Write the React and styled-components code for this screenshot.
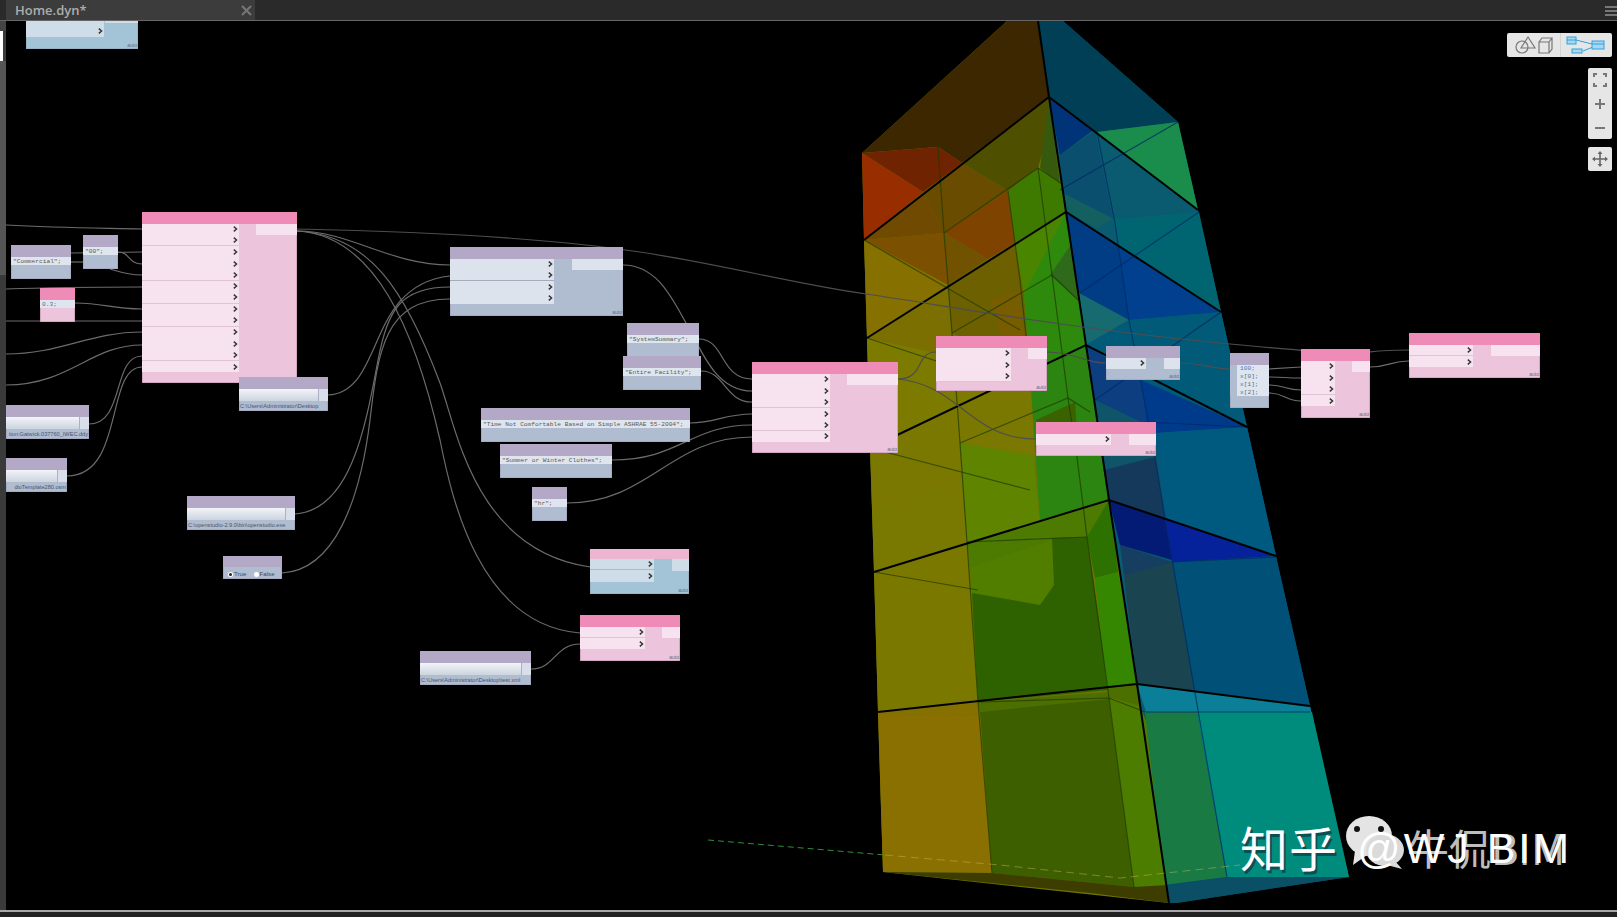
import React from 'react';
import styled, {createGlobalStyle} from 'styled-components';

const GlobalStyle = createGlobalStyle`
  html, body { margin: 0; padding: 0; background: #000; overflow: hidden; }
  #root { width: 1617px; height: 917px; }
`;

const tones = {
  pink: {header: '#ee8bb6', body: '#ecc4dc', row: '#f6e3ef', line: '#dfc3d6', edge: '#b98aa8'},
  grey: {header: '#b3a9c6', body: '#b0bcd0', row: '#dde3ec', line: '#a4acbc', edge: '#9a9cb4'},
  blue: {header: '#ecb5d2', body: '#a3c3d6', row: '#cfdde8', line: '#a5bccd', edge: '#8ca6ba'},
};

const Page = styled.div`
  width: 1617px;
  height: 917px;
  display: flex;
  flex-direction: column;
  background: #000;
  font-family: 'Open Sans', 'Liberation Sans', sans-serif;
`;

const TabBar = styled.div`
  height: 20px;
  flex: none;
  display: flex;
  align-items: stretch;
  justify-content: space-between;
  background: #2a2a2a;
  border-bottom: 1px solid #666;
`;

const Tab = styled.div`
  box-sizing: border-box;
  width: 249px;
  margin-left: 6px;
  padding: 0 3px 0 9px;
  display: flex;
  align-items: center;
  justify-content: space-between;
  background: #3c3c3c;
  color: #adadad;
  font-size: 13px;
  font-weight: 600;
`;

const Hamburger = styled.div`
  width: 12px;
  margin-top: 6px;
  display: flex;
  flex-direction: column;
  gap: 2px;
  i { display: block; height: 2px; background: #777; }
`;

const Main = styled.div`
  flex: 1;
  display: flex;
  min-height: 0;
`;

const LeftStrip = styled.div`
  width: 6px;
  flex: none;
  display: flex;
  flex-direction: column;
  background: #3a3a3a;
`;

const StripCap = styled.div`
  height: 10px;
  background: #444;
`;

const StripMark = styled.div`
  width: 3px;
  height: 30px;
  background: #fff;
`;

const StripThumb = styled.div`
  height: 214px;
  background: #555;
`;

const Canvas = styled.div`
  flex: 1;
  position: relative;
  overflow: hidden;
  background: #000;
`;

const Stage = styled.div`
  position: absolute;
  left: -6px;
  top: -21px;
  width: 1617px;
  height: 917px;
`;

const Drawing = styled.svg`
  position: absolute;
  left: 0;
  top: 0;
`;

const BottomBar = styled.div`
  height: 5px;
  flex: none;
  background: #222;
  border-top: 2px solid #a8a8a8;
`;

const NodeBox = styled.div`
  position: absolute;
  left: ${p => p.$x}px;
  top: ${p => p.$y}px;
  width: ${p => p.$w}px;
  height: ${p => p.$h}px;
  display: flex;
  flex-direction: column;
  background: ${p => tones[p.$tone].body};
  box-shadow: inset 0 0 0 0.5px ${p => tones[p.$tone].edge};
`;

const NodeHeader = styled.div`
  height: ${p => p.$h}px;
  flex: none;
  background: ${p => tones[p.$tone].header};
`;

const NodeBody = styled.div`
  display: flex;
  justify-content: space-between;
  align-items: flex-start;
`;

const Inputs = styled.div`
  width: ${p => p.$w}px;
  display: flex;
  flex-direction: column;
  background: ${p => tones[p.$tone].row};
`;

const InputRow = styled.div`
  height: ${p => p.$h}px;
  box-sizing: border-box;
  display: flex;
  align-items: center;
  justify-content: flex-end;
  padding-right: 1px;
  border-bottom: ${p => (p.$sep ? `1px solid ${tones[p.$tone].line}` : 'none')};
`;

const Output = styled.div`
  width: ${p => p.$w}px;
  height: 11.5px;
  flex: none;
  background: ${p => tones[p.$tone].row};
`;

const AutoLabel = styled.span`
  position: absolute;
  right: 1px;
  bottom: 1px;
  font-family: 'Liberation Sans', sans-serif;
  font-size: 5px;
  line-height: 6px;
  color: #5f6f86;
`;

const CodeRow = styled.div`
  height: ${p => p.$h}px;
  display: flex;
  align-items: center;
  padding-left: 2px;
  background: #dfe5ee;
  color: ${p => p.$color || '#5a5a52'};
  font-family: 'Liberation Mono', monospace;
  font-size: 6.2px;
  white-space: pre;
  overflow: hidden;
`;

const PickerRow = styled.div`
  height: 11.5px;
  flex: none;
  display: flex;
  background: #dfe5ee;
`;

const PickerField = styled.div`
  flex: 1;
  background: linear-gradient(#f2f4f8, #ccd4df);
`;

const PickerGrip = styled.div`
  width: 9px;
  background: #d9dfea;
  border-left: 1px solid #a9b2c4;
`;

const PathLabel = styled.div`
  flex: 1;
  display: flex;
  align-items: center;
  justify-content: ${p => (p.$clip ? 'flex-end' : 'flex-start')};
  padding: 0 1px;
  color: #45566e;
  font-family: 'Liberation Sans', sans-serif;
  font-size: 5.6px;
  white-space: nowrap;
  overflow: hidden;
`;

const ToggleRow = styled.div`
  height: 12px;
  padding-left: 6px;
  display: flex;
  align-items: center;
  gap: 8px;
  color: #3d4a60;
  font-family: 'Liberation Sans', sans-serif;
  font-size: 6.2px;
`;

const Radio = styled.i`
  display: inline-block;
  width: 3px;
  height: 3px;
  margin-right: 2px;
  border-radius: 50%;
  background: ${p => (p.$on ? '#222' : '#fff')};
  box-shadow: 0 0 0 1px #fff;
`;

const CodeLines = styled.div`
  display: flex;
  flex-direction: column;
  padding-left: 10px;
  background: linear-gradient(to right, #b0bcd0 0 7px, #dfe5ee 7px);
  height: 31px;
  font-family: 'Liberation Mono', monospace;
  font-size: 6.2px;
  line-height: 8px;
  color: #5a6d8c;
  span:first-child { color: #3f76c4; }
`;

const Controls = styled.div`
  position: absolute;
  right: 5px;
  top: 33px;
  display: flex;
  flex-direction: column;
  align-items: flex-end;
  gap: 11px;
`;

const ViewSwitch = styled.div`
  width: 105px;
  height: 24px;
  display: flex;
  background: #e6e6e6;
  border-radius: 2px;
`;

const ViewButton = styled.div`
  width: ${p => p.$w}px;
  display: flex;
  align-items: center;
  justify-content: center;
  border-right: ${p => (p.$split ? '1px solid #d4d4d4' : 'none')};
`;

const ZoomStack = styled.div`
  width: 24px;
  display: flex;
  flex-direction: column;
  gap: 8px;
`;

const ZoomGroup = styled.div`
  display: flex;
  flex-direction: column;
  background: #e6e6e6;
  border-radius: 2px;
`;

const ZoomButton = styled.div`
  height: ${p => p.$h}px;
  display: flex;
  align-items: center;
  justify-content: center;
`;

const Watermark = styled.div`
  position: absolute;
  left: ${p => p.$x}px;
  top: ${p => p.$y}px;
  color: ${p => p.$color || '#fff'};
  font-family: ${p => p.$family || "'Liberation Sans'"}, 'Noto Sans CJK SC', sans-serif;
  font-size: ${p => p.$size}px;
  font-weight: 400;
  line-height: 1;
  letter-spacing: ${p => p.$spacing || 0}px;
  white-space: nowrap;
  text-shadow: ${p => p.$shadow || 'none'};
`;

const Wechat = styled.svg`
  position: absolute;
  left: 1345px;
  top: 813px;
`;

const faces = [
  // whole left and right sides, so no black shows between the patches
  ['862,153 1007,21 1038,21 1049,97 1066,212 1086,345 1109,500 1137,684 1169,903 883,872 878,712 874,572 870,448 867,338 864,240', '#6e7400'],
  ['1038,21 1063,21 1178,122 1198,210 1221,312 1247,427 1276,556 1310,706 1349,877 1176,903 1169,903 1137,684 1109,500 1086,345 1066,212 1049,97', '#0a5a70'],
  // roof and first band, left face
  ['862,153 1007,21 1038,21 1049,97 962,163 938,147', '#3c2700'],
  ['862,153 938,147 962,163 923,192', '#6f2300'],
  ['862,153 923,192 864,240', '#982d00'],
  ['1049,97 962,163 1008,191 1038,168 1046,140', '#4f4f00'],
  ['1049,97 1040,168 1060,184', '#36590e'],
  // second band, left face
  ['864,240 923,192 944,233', '#6f4a00'],
  ['923,192 962,163 1008,191 944,233', '#6a4c00'],
  ['864,240 944,233 948,285', '#7b5000'],
  ['864,240 948,285 867,338', '#857000'],
  ['944,233 1008,191 1015,243 988,259', '#7f4300'],
  ['944,233 988,259 948,285', '#715200'],
  ['1008,191 1038,168 1062,184 1066,212 1015,243', '#3f7a00'],
  ['1015,243 1066,212 1056,275 1024,295', '#4a8500'],
  // third band, left face
  ['867,338 948,285 952,333 1013,370 870,372', '#7a6f00'],
  ['867,338 1013,370 1030,372 870,448', '#7d7a00'],
  ['948,285 1015,243 1024,295 1030,372 952,333', '#6d6000'],
  ['990,300 1018,290 1030,372 1010,368', '#785c00'],
  ['1024,295 1066,212 1086,345 1030,372', '#2e8a0c'],
  ['1050,275 1072,243 1078,300', '#2e6a1a'],
  // fourth band, left face
  ['870,448 1030,372 1035,460 960,443 962,480 872,510', '#7a7800'],
  ['872,510 962,480 967,542 874,572', '#797800'],
  ['960,443 1033,455 1040,520 1052,540 967,542', '#5f8400'],
  ['1030,372 1086,345 1109,500 1087,537 1040,520', '#2c8510'],
  ['1036,420 1075,402 1077,430 1042,442', '#3a6300'],
  // fifth band, left face
  ['874,572 967,542 969,568 978,702 878,712', '#7b7800'],
  ['967,542 1109,500 1087,537 970,568', '#4d7a00'],
  ['970,568 1052,540 1054,585 1040,605 972,593', '#527e00'],
  ['972,593 1040,605 1054,585 1052,538 1087,537 1109,690 978,702', '#2e6200'],
  ['1087,537 1109,500 1115,545 1118,572 1095,578', '#2d7200'],
  ['1095,578 1118,572 1137,684 1107,688', '#358600'],
  // bottom band, left face
  ['878,712 978,702 980,716 878,714', '#857000'],
  ['878,714 980,716 992,873 883,872', '#8a7000'],
  ['978,702 1109,692 1112,700 980,712', '#4d6f00'],
  ['980,712 1109,699 1134,887 992,873', '#3d5f00'],
  ['1107,688 1137,684 1140,706 1111,698', '#4c7000'],
  ['1109,699 1140,706 1144,716 1150,730 1167,888 1134,887', '#4c7d00'],
  ['883,872 992,873 1134,887 1167,885 1169,903 1090,893', '#3d3d00'],
  // first bands, right face
  ['1038,21 1063,21 1178,122 1097,132 1093,130 1049,97', '#003f55'],
  ['1049,97 1093,130 1060,155', '#003377'],
  ['1097,132 1178,122 1198,210', '#1a8c4c'],
  ['1060,155 1095,131 1113,218 1063,193', '#0a4f6e'],
  ['1095,131 1198,210 1113,218', '#0a5a70'],
  ['1063,193 1113,219 1097,228 1066,212', '#145f60'],
  ['1113,219 1199,212 1221,312 1129,320 1118,246', '#006570'],
  // second and third bands, right face
  ['1066,212 1118,245 1129,320 1079,293', '#003d85'],
  ['1118,245 1221,312 1129,320', '#00408e'],
  ['1079,293 1129,320 1086,345', '#166a70'],
  ['1129,320 1221,312 1247,427 1141,380 1086,345', '#005a78'],
  ['1086,345 1141,380 1147,425 1095,400', '#0d3f80'],
  ['1141,380 1247,427 1157,433 1147,425', '#003a8a'],
  ['1095,400 1147,425 1155,433 1165,518 1109,500', '#0f5468'],
  ['1104,470 1155,457 1165,518 1109,500', '#14395a'],
  ['1155,433 1247,427 1276,556 1165,518', '#005a80'],
  // lower bands, right face
  ['1109,500 1165,518 1172,560 1120,545', '#041b75'],
  ['1165,518 1276,556 1172,562', '#06229a'],
  ['1120,545 1172,562 1174,568 1124,575', '#163e60'],
  ['1124,575 1173,562 1195,693 1137,684', '#1a4550'],
  ['1172,562 1276,557 1310,706 1195,693', '#005078'],
  ['1137,684 1310,706 1312,716 1146,712', '#0b7f97'],
  ['1145,712 1197,712 1227,877 1165,885', '#1a7a44'],
  ['1197,712 1312,712 1349,877 1227,877', '#008c7d'],
  ['1165,885 1227,877 1349,877 1176,903 1169,903', '#0a4f66'],
];

const heavyLines = [
  '864,240 1049,97 1198,210',
  '867,338 1066,212 1221,312',
  '870,448 1086,345 1247,427',
  '874,572 1109,500 1276,556',
  '878,712 1137,684 1310,706',
  '1038,21 1049,97 1066,212 1086,345 1109,500 1137,684 1169,903',
];

const thinLines = [
  '938,147 944,233 952,333 960,443 967,542 978,702 992,873',
  '1008,191 1020,280 1030,372',
  '1038,168 1052,275 1068,398 1077,457 1087,537 1109,698 1134,887',
  '944,233 1038,168 1062,184',
  '952,333 1052,275 1078,300',
  '960,443 1068,398 1090,412',
  '967,542 1087,537',
  '978,702 1109,698 1145,712',
  '864,240 1020,330',
  '867,338 1024,390',
  '870,448 1030,490',
  '874,572 978,590',
];

const blueLines = [
  '1097,132 1115,223 1129,320 1155,457 1165,518 1195,693 1227,877',
  '1060,190 1178,122',
  '1080,293 1199,212',
  '1095,400 1221,312',
  '1145,422 1247,427',
  '1172,562 1276,557',
  '1146,712 1310,712',
];

const wires = [
  'M6 225 C60 228 100 228 142 229',
  'M6 289 C60 287 100 287 142 287',
  'M6 321 C60 321 100 321 142 321',
  'M6 354 C60 354 90 332 142 332',
  'M6 385 C70 385 90 345 142 345',
  'M71 253 L142 252',
  'M71 262 L83 262',
  'M118 252 C130 252 128 264 142 264',
  'M110 269 C120 272 128 275 142 275',
  'M75 303 C105 303 110 309 142 309',
  'M89 424 C125 424 112 356 142 356',
  'M67 476 C125 476 105 367 142 367',
  'M297 231 C350 231 390 265 450 265',
  'M297 231 C370 235 405 290 440 383 C457 430 475 550 590 567',
  'M297 231 C375 235 415 330 440 440 C452 500 480 625 580 633',
  'M328 395 C385 392 365 285 450 276',
  'M295 514 C350 510 365 430 378 360 C388 310 400 287 450 287',
  'M282 573 C335 570 360 500 370 420 C378 350 385 299 450 299',
  'M623 265 C660 265 675 305 690 330 C705 360 720 391 752 391',
  'M699 339 C725 339 720 379 752 379',
  'M701 371 C725 371 725 402 752 402',
  'M690 423 C715 423 725 414 752 414',
  'M612 460 C680 460 690 425 752 425',
  'M567 503 C650 503 670 437 752 437',
  'M531 669 C555 669 555 644 580 644',
  'M1269 369 L1301 367',
  'M1269 377 C1285 377 1285 378 1301 378',
  'M1269 385 C1285 385 1285 390 1301 390',
  'M1269 393 C1285 393 1285 401 1301 401',
  'M1370 367 C1390 367 1390 361 1409 361',
];

const dimWires = [
  'M297 229 C450 232 560 240 640 252 S 800 285 866 294 S 1060 328 1230 344 S 1340 350 1409 350',
  'M898 379 C925 379 915 352 936 352',
  'M898 379 C960 385 970 439 1036 439',
  'M1047 352 C1075 352 1085 363 1106 363',
  'M1180 363 C1200 363 1215 369 1230 369',
];

const Chevron = () => (
  <svg width="5" height="6" viewBox="0 0 5 6">
    <path d="M0.8 0.6 L3.6 3 L0.8 5.4" fill="none" stroke="#333" strokeWidth="1.4" />
  </svg>
);

// rows: one entry per input port, true when a divider follows that port
const PortNode = ({tone, x, y, w, h, head = 11.5, left, out, rows, rowH = 11.46}) => (
  <NodeBox $tone={tone} $x={x} $y={y} $w={w} $h={h}>
    <NodeHeader $tone={tone} $h={head} />
    <NodeBody>
      <Inputs $tone={tone} $w={left}>
        {rows.map((sep, i) => (
          <InputRow key={i} $tone={tone} $h={rowH} $sep={sep}>
            <Chevron />
          </InputRow>
        ))}
      </Inputs>
      <Output $tone={tone} $w={out} />
    </NodeBody>
    <AutoLabel>auto</AutoLabel>
  </NodeBox>
);

const TextNode = ({x, y, w, text}) => (
  <NodeBox $tone="grey" $x={x} $y={y} $w={w} $h={34}>
    <NodeHeader $tone="grey" $h={12} />
    <CodeRow $h={8}>{text}</CodeRow>
  </NodeBox>
);

const FileNode = ({x, y, w, path, clip}) => (
  <NodeBox $tone="grey" $x={x} $y={y} $w={w} $h={34}>
    <NodeHeader $tone="grey" $h={12} />
    <PickerRow>
      <PickerField />
      <PickerGrip />
    </PickerRow>
    <PathLabel $clip={clip}>{path}</PathLabel>
  </NodeBox>
);

export default function App() {
  return (
    <Page>
      <GlobalStyle />
      <TabBar>
        <Tab>
          Home.dyn*
          <svg width="11" height="11" viewBox="0 0 11 11">
            <path d="M1 1 L10 10 M10 1 L1 10" stroke="#777" strokeWidth="2" />
          </svg>
        </Tab>
        <Hamburger>
          <i />
          <i />
          <i />
        </Hamburger>
      </TabBar>
      <Main>
        <LeftStrip>
          <StripCap />
          <StripMark />
          <StripThumb />
        </LeftStrip>
        <Canvas>
          <Stage>
            <Drawing width="1617" height="917" viewBox="0 0 1617 917">
              <line x1="708" y1="840" x2="885" y2="855" stroke="#2f8f3f" strokeWidth="1" strokeDasharray="6 4" />
              {faces.map(([points, fill], i) => (
                <polygon key={i} points={points} fill={fill} />
              ))}
              {thinLines.map((points, i) => (
                <polyline key={i} points={points} fill="none" stroke="#1f3a00" strokeOpacity="0.7" strokeWidth="1.2" />
              ))}
              {blueLines.map((points, i) => (
                <polyline key={i} points={points} fill="none" stroke="#002a66" strokeOpacity="0.75" strokeWidth="1.2" />
              ))}
              {heavyLines.map((points, i) => (
                <polyline key={i} points={points} fill="none" stroke="#000" strokeWidth="2" />
              ))}
              <polyline points="885,855 1000,865 1120,878 1240,865" fill="none" stroke="#c9b56a" strokeOpacity="0.45" strokeWidth="1" strokeDasharray="8 5" />
              {wires.map((d, i) => (
                <path key={i} d={d} fill="none" stroke="#6c6c6c" strokeWidth="1.2" />
              ))}
              {dimWires.map((d, i) => (
                <path key={i} d={d} fill="none" stroke="#4e4e4e" strokeWidth="1.2" />
              ))}
            </Drawing>

            <PortNode tone="blue" x={26} y={10} w={112} h={39} head={1} left={78} out={33} rows={[false, false]} rowH={13} />
            <PortNode
              tone="pink"
              x={142}
              y={212}
              w={155}
              h={171}
              left={97}
              out={41}
              rows={[false, true, false, false, true, false, true, false, true, false, false, true, false]}
            />
            <TextNode x={11} y={245} w={60} text={'"Commercial";'} />
            <TextNode x={83} y={235} w={35} text={'"00";'} />
            <NodeBox $tone="pink" $x={40} $y={288} $w={35} $h={34}>
              <NodeHeader $tone="pink" $h={12} />
              <CodeRow $h={8} $color="#5a6d8c">0.3;</CodeRow>
            </NodeBox>
            <FileNode x={239} y={377} w={89} path={'C:\\Users\\Administrator\\Desktop'} />
            <FileNode x={6} y={405} w={83} path="tion:Gatwick.037760_IWEC.ddy" clip />
            <FileNode x={6} y={458} w={61} path="dioTemplate280.osm" clip />
            <PortNode tone="grey" x={450} y={247} w={173} h={69} left={104} out={51} rows={[false, true, false, false]} rowH={11.3} />
            <TextNode x={627} y={323} w={72} text={'"SystemSummary";'} />
            <TextNode x={623} y={356} w={78} text={'"Entire Facility";'} />
            <TextNode x={481} y={408} w={209} text={'"Time Not Comfortable Based on Simple ASHRAE 55-2004";'} />
            <TextNode x={500} y={444} w={112} text={'"Summer or Winter Clothes";'} />
            <TextNode x={532} y={487} w={35} text={'"hr";'} />
            <PortNode tone="pink" x={752} y={362} w={146} h={91} left={78} out={51} rows={[false, false, true, false, true, false]} />
            <PortNode tone="pink" x={936} y={336} w={111} h={55} left={75} out={19} rows={[false, false, true]} rowH={11.6} />
            <PortNode tone="grey" x={1106} y={346} w={74} h={34} left={40} out={16} rows={[false]} />
            <PortNode tone="pink" x={1036} y={422} w={120} h={34} left={75} out={27} rows={[false]} />
            <NodeBox $tone="grey" $x={1230} $y={353} $w={39} $h={55}>
              <NodeHeader $tone="grey" $h={12} />
              <CodeLines>
                <span>100;</span>
                <span>x[0];</span>
                <span>x[1];</span>
                <span>x[2];</span>
              </CodeLines>
            </NodeBox>
            <PortNode tone="pink" x={1301} y={349} w={69} h={69} left={34} out={18} rows={[false, false, true, false]} />
            <PortNode tone="pink" x={1409} y={333} w={131} h={45} left={64} out={49} rows={[true, false]} />
            <FileNode x={187} y={496} w={108} path={'C:\\openstudio-2.9.0\\bin\\openstudio.exe'} />
            <NodeBox $tone="grey" $x={223} $y={556} $w={59} $h={23}>
              <NodeHeader $tone="grey" $h={11} />
              <ToggleRow>
                <span><Radio $on />True</span>
                <span><Radio />False</span>
              </ToggleRow>
            </NodeBox>
            <PortNode tone="blue" x={590} y={549} w={99} h={45} head={10} left={64} out={17} rows={[true, false]} />
            <PortNode tone="pink" x={580} y={615} w={100} h={46} left={65} out={18} rows={[true, false]} />
            <FileNode x={420} y={651} w={111} path={'C:\\Users\\Administrator\\Desktop\\test.xml'} />

            <Watermark $x={1240} $y={822} $size={48} $spacing={1} $family="'Noto Sans CJK SC'" $shadow="2px 3px 0 #0a4f55">知乎</Watermark>
            <Wechat width="68" height="62" viewBox="0 0 68 62">
              <ellipse cx="24" cy="23" rx="23" ry="20" fill="#e4e4e4" />
              <path d="M10 38 L8 52 L22 42 Z" fill="#e4e4e4" />
              <ellipse cx="40" cy="37" rx="19" ry="16" fill="#dadada" />
              <path d="M50 48 L57 56 L42 52 Z" fill="#dadada" />
              <circle cx="12" cy="16" r="3" fill="#111" />
              <circle cx="36" cy="16" r="3" fill="#111" />
            </Wechat>
            <Watermark $x={1407} $y={826} $size={42} $color="#bdbdbd" $family="'Noto Sans CJK SC'">牛侃BIM</Watermark>
            <Watermark $x={1357} $y={827} $size={43} $spacing={3}>@WJ BIM</Watermark>

            <Controls>
              <ViewSwitch>
                <ViewButton $w={53} $split>
                  <svg width="40" height="20" viewBox="0 0 40 20">
                    <circle cx="9" cy="12" r="6" fill="none" stroke="#777" strokeWidth="1.2" />
                    <path d="M8 13 L15 2 L22 13 Z" fill="none" stroke="#777" strokeWidth="1.2" />
                    <path d="M26 7 H36 V18 H26 Z M26 7 L29 3 H39 L36 7 M36 18 L39 14 V3" fill="none" stroke="#777" strokeWidth="1.2" />
                  </svg>
                </ViewButton>
                <ViewButton $w={52}>
                  <svg width="40" height="20" viewBox="0 0 40 20">
                    <path d="M10 5 L26 9 M17 16 L27 12" fill="none" stroke="#2ea2dc" strokeWidth="1" />
                    <rect x="1" y="2" width="9" height="7" fill="#a7d8f0" stroke="#2ea2dc" />
                    <path d="M1 5 H10" stroke="#2ea2dc" />
                    <rect x="6" y="14" width="10" height="4" fill="#a7d8f0" stroke="#2ea2dc" />
                    <rect x="26" y="6" width="12" height="8" fill="#a7d8f0" stroke="#2ea2dc" />
                    <path d="M26 9 H38" stroke="#2ea2dc" />
                  </svg>
                </ViewButton>
              </ViewSwitch>
              <ZoomStack>
                <ZoomGroup>
                  <ZoomButton $h={24}>
                    <svg width="14" height="14" viewBox="0 0 14 14">
                      <path d="M1 4 V1 H4 M10 1 H13 V4 M13 10 V13 H10 M4 13 H1 V10" fill="none" stroke="#777" strokeWidth="2" />
                    </svg>
                  </ZoomButton>
                  <ZoomButton $h={24}>
                    <svg width="12" height="12" viewBox="0 0 12 12">
                      <path d="M6 1 V11 M1 6 H11" stroke="#777" strokeWidth="2" />
                    </svg>
                  </ZoomButton>
                  <ZoomButton $h={23}>
                    <svg width="12" height="4" viewBox="0 0 12 4">
                      <path d="M1 2 H11" stroke="#777" strokeWidth="2" />
                    </svg>
                  </ZoomButton>
                </ZoomGroup>
                <ZoomGroup>
                  <ZoomButton $h={24}>
                    <svg width="16" height="16" viewBox="0 0 16 16">
                      <path d="M8 1 V15 M1 8 H15" stroke="#666" strokeWidth="1.6" />
                      <path d="M8 0 L5.5 3 H10.5 Z M8 16 L5.5 13 H10.5 Z M0 8 L3 5.5 V10.5 Z M16 8 L13 5.5 V10.5 Z" fill="#666" />
                    </svg>
                  </ZoomButton>
                </ZoomGroup>
              </ZoomStack>
            </Controls>
          </Stage>
        </Canvas>
      </Main>
      <BottomBar />
    </Page>
  );
}
